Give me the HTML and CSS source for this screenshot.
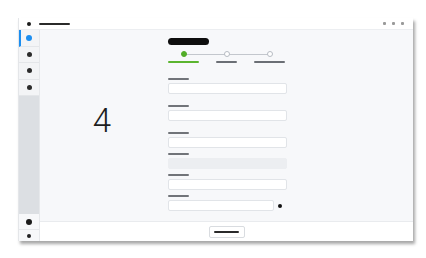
FILE: index.html
```html
<!DOCTYPE html>
<html>
<head>
<meta charset="utf-8">
<link rel="stylesheet" href="styles.css">
</head>
<body>
<div class="window">
  <header class="topbar">
    <span class="tb-dot"></span>
    <span class="tb-title"></span>
    <span class="tb-spacer"></span>
    <span class="tb-more"><i></i><i></i><i></i></span>
  </header>
  <div class="body">
    <nav class="sidebar">
      <div class="nav-item active"><span class="nav-dot"></span></div>
      <div class="nav-item"><span class="nav-dot"></span></div>
      <div class="nav-item"><span class="nav-dot"></span></div>
      <div class="nav-item"><span class="nav-dot"></span></div>
      <div class="nav-fill"></div>
      <div class="nav-bottom big"><span class="nav-dot"></span></div>
      <div class="nav-bottom small"><span class="nav-dot"></span></div>
    </nav>
    <div class="main-col">
      <main class="main">
        <section class="left-panel"><span class="big-num">4</span></section>
        <section class="form">
          <div class="form-title"></div>
          <div class="stepper">
            <span class="step-line"></span>
            <div class="step done"><span class="step-dot"></span><span class="step-bar"></span></div>
            <div class="step mid"><span class="step-dot"></span><span class="step-bar"></span></div>
            <div class="step"><span class="step-dot"></span><span class="step-bar"></span></div>
          </div>
          <div class="fields">
            <div class="field loose"><span class="label"></span><input class="input" type="text"></div>
            <div class="field loose"><span class="label"></span><input class="input" type="text"></div>
            <div class="field"><span class="label"></span><input class="input" type="text"></div>
            <div class="field"><span class="label"></span><input class="input disabled" type="text" disabled></div>
            <div class="field"><span class="label"></span><input class="input" type="text"></div>
            <div class="field"><span class="label"></span><div class="input-row"><input class="input short" type="text"><span class="row-dot"></span></div></div>
          </div>
        </section>
      </main>
      <footer class="footer"><button class="btn"><span class="btn-dash"></span></button></footer>
    </div>
  </div>
</div>
</body>
</html>
```
FILE: styles.css
```css
* { box-sizing: border-box; }
html, body { margin: 0; padding: 0; background: #ffffff; }
body { font-family: "Liberation Sans", Arial, sans-serif; width: 426px; height: 258px; overflow: hidden; }

.window {
  margin: 18px 0 0 18px;
  width: 395px;
  height: 223px;
  display: flex;
  flex-direction: column;
  background: #fff;
  border-left: 1px solid #e4e6e9;
  box-shadow: 2px 3px 3px rgba(0,0,0,0.35);
}

.topbar {
  height: 12px;
  flex: 0 0 12px;
  border-bottom: 1px solid #eceef1;
  display: flex;
  align-items: center;
  padding: 0 9px 0 8px;
}
.tb-dot { width: 4px; height: 4px; border-radius: 50%; background: #1b1b1b; }
.tb-title { width: 31px; height: 2px; background: #2a2a2a; margin-left: 8px; border-radius: 1px; }
.tb-spacer { flex: 1; }
.tb-more { display: flex; gap: 6px; }
.tb-more i { width: 3px; height: 3px; background: #9a9a9a; border-radius: 1px; display: block; }

.body { flex: 1; display: flex; min-height: 0; }

.sidebar {
  width: 21px;
  flex: 0 0 21px;
  display: flex;
  flex-direction: column;
  border-right: 1px solid #e6e8eb;
}
.nav-item {
  height: 16.5px;
  flex: 0 0 16.5px;
  background: #f3f4f6;
  border-bottom: 1px solid #e4e6e9;
  display: flex;
  align-items: center;
  justify-content: center;
}
.nav-item.active { border-left: 2px solid #1c8ef0; padding-right: 2px; }
.nav-dot { width: 5px; height: 5px; border-radius: 50%; background: #2b2b2b; }
.nav-item.active .nav-dot { background: #1c8ef0; width: 6px; height: 6px; }
.nav-fill { flex: 1; background: #dcdfe3; }
.nav-bottom { display: flex; align-items: center; justify-content: center; background: #f7f8fa; }
.nav-bottom.big { height: 16px; flex: 0 0 16px; border-bottom: 1px solid #e6e8eb; }
.nav-bottom.big .nav-dot { width: 6px; height: 6px; background: #1b1b1b; }
.nav-bottom.small { height: 11px; flex: 0 0 11px; }
.nav-bottom.small .nav-dot { width: 4px; height: 4px; background: #222; }

.main-col { flex: 1; display: flex; flex-direction: column; }
.main { flex: 1; background: #f7f8fa; display: flex; }

.left-panel { width: 124px; margin-right: 4px; padding-top: 74px; text-align: center; }
.big-num { display: block; font-family: Roboto, "Liberation Sans", sans-serif; font-size: 33px; line-height: 33px; color: #1e1e1e; font-weight: 300; }

.form { width: 119px; padding-top: 8px; }
.form-title { width: 41px; height: 7px; background: #0e0e0e; border-radius: 3.5px; }

.stepper { position: relative; display: flex; gap: 17px; margin-top: 6px; width: 117px; }
.step-line { position: absolute; left: 16px; right: 16px; top: 2.5px; height: 1px; background: #c3c7cd; }
.step { position: relative; width: 31px; display: flex; flex-direction: column; align-items: center; }
.step.mid { width: 21px; }
.step-dot { width: 6px; height: 6px; border-radius: 50%; background: #fff; border: 1px solid #b7bcc3; }
.step-bar { margin-top: 4px; width: 100%; height: 2px; background: #6b6f75; border-radius: 1px; }
.step.done .step-dot { background: #52ad28; border-color: #52ad28; }
.step.done .step-bar { background: #5bb52f; }

.fields { margin-top: 15px; }
.field { margin-bottom: 5px; }
.field.loose { margin-bottom: 11px; }
.label { display: block; width: 21px; height: 2px; background: #717479; margin-bottom: 3px; border-radius: 1px; }
.input {
  display: block;
  width: 100%;
  height: 11px;
  margin: 0;
  padding: 0;
  border: 1px solid #e1e4e8;
  border-radius: 2px;
  background: #fff;
  outline: none;
}
.input.disabled { background: #eceef1; border-color: #eceef1; }
.input-row { display: flex; align-items: center; }
.input.short { width: 106px; }
.row-dot { width: 4px; height: 4px; border-radius: 50%; background: #111; margin-left: 4px; }

.footer {
  height: 20px;
  flex: 0 0 20px;
  border-top: 1px solid #e9ebee;
  background: #fff;
  display: flex;
  align-items: center;
  justify-content: center;
}
.btn {
  width: 36px;
  height: 12px;
  padding: 0;
  border: 1px solid #d9dce0;
  border-radius: 2px;
  background: #fff;
  display: flex;
  align-items: center;
  justify-content: center;
}
.btn-dash { width: 25px; height: 2px; background: #2a2a2a; border-radius: 1px; }
```
